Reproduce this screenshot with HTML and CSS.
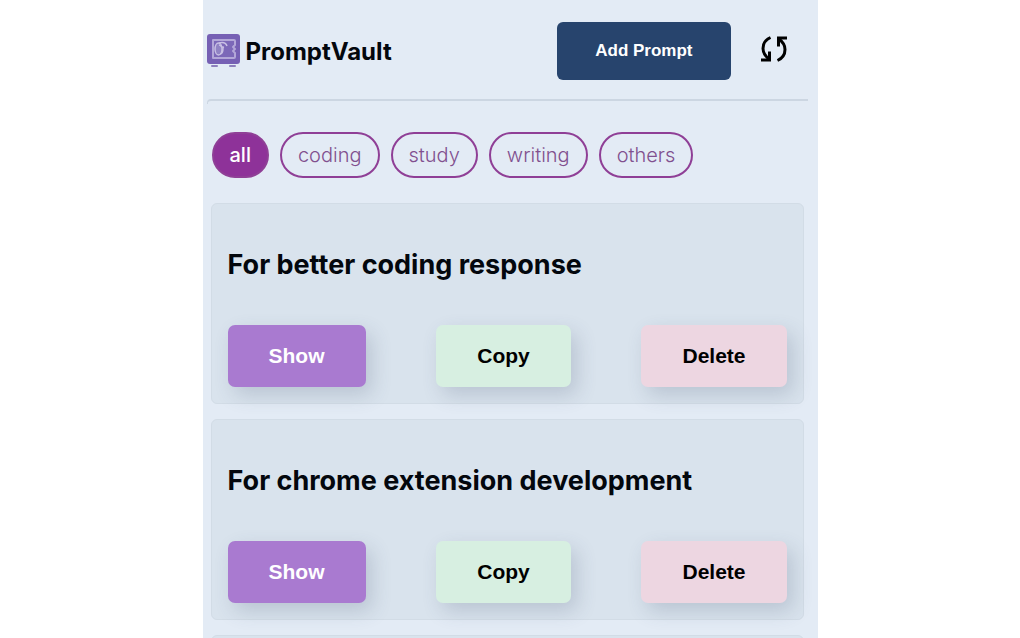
FILE: index.html
```html
<!DOCTYPE html>
<html lang="en">
<head>
  <meta charset="UTF-8" />
  <meta name="viewport" content="width=device-width, initial-scale=1.0"/>
  <title>PromptVault</title>
  <link rel="stylesheet" href="styles.css">
</head>
<body>

  <div class="popup">
    <header class="header">
      <div class="brand">
        <svg class="logo" viewBox="0 0 33 34" aria-hidden="true">
          <rect x="4" y="31" width="7" height="2" rx="1" fill="#8d80bd"/>
          <rect x="22" y="31" width="7" height="2" rx="1" fill="#8d80bd"/>
          <rect width="33" height="30" rx="3" fill="#7660b4"/>
          <path d="M6 6h21q1 0 1 1v4l-2 2 2 2-2 2 2 2v4q0 1-1 1H6z" fill="#7c68b8" stroke="#b3a7d8" stroke-width="2" stroke-linejoin="round"/>
          <ellipse cx="11.500" cy="15" rx="3.500" ry="6" fill="#9183c4" stroke="#c9c0e4" stroke-width="1.500"/>
          <path d="M12 11c3 0 1 3 5 2M12 9c4-1 7 0 8 3M13 20c2 0 3-2 3-6" fill="none" stroke="#c9c0e4" stroke-width="1.500"/>
        </svg>
        <h1>PromptVault</h1>
      </div>
      <div class="actions">
        <button class="add-btn">Add Prompt</button>
        <button class="reload-btn" aria-label="Reload">
          <svg class="reload-icon" viewBox="0 0 28 26" fill="none" stroke="#000" stroke-width="3" aria-hidden="true">
            <path d="M10.500 1.500C6 3.500 3 7.500 3 12.500c0 4.500 2 7.500 6 10.500"/>
            <path d="M1 24h8.500v-8.500"/>
            <path d="M17.500 24.500c4.500-2 7.500-6 7.500-11 0-4.500-2-7.500-6-10.500"/>
            <path d="M27 2h-8.500v8.500"/>
          </svg>
        </button>
      </div>
    </header>

    <hr class="divider">

    <nav class="tags">
      <button class="tag active">all</button>
      <button class="tag">coding</button>
      <button class="tag">study</button>
      <button class="tag">writing</button>
      <button class="tag">others</button>
    </nav>

    <main class="prompts">
      <article class="card">
        <h2>For better coding response</h2>
        <div class="card-buttons">
          <button class="btn show">Show</button>
          <button class="btn copy">Copy</button>
          <button class="btn delete">Delete</button>
        </div>
      </article>
      <article class="card">
        <h2>For chrome extension development</h2>
        <div class="card-buttons">
          <button class="btn show">Show</button>
          <button class="btn copy">Copy</button>
          <button class="btn delete">Delete</button>
        </div>
      </article>
      <article class="card"></article>
    </main>
  </div>

</body>
</html>
```

FILE: styles.css
```css
* {
  box-sizing: border-box;
}

body {
  margin: 0;
  background-color: #fff;
  font-family: Inter, sans-serif;
  color: #03070d;
}

button {
  font-family: "Liberation Sans", Arial, sans-serif;
  cursor: pointer;
}

.popup {
  max-width: 615px;
  height: 100vh;
  margin: 0 auto;
  padding: 22px 8px 0;
  background-color: #e3ebf5;
  overflow: hidden;
}

.header {
  display: flex;
  justify-content: space-between;
  align-items: center;
  padding: 0 22px 0 0;
  margin-left: -4px;
}

.brand {
  display: flex;
  align-items: center;
  gap: 6px;
}

.logo {
  width: 33px;
  height: 34px;
}

h1 {
  margin: 0;
  font-size: 24px;
  font-weight: 700;
}

.actions {
  display: flex;
  align-items: center;
  gap: 29px;
}

.add-btn {
  padding: 18px 38px;
  border: none;
  border-radius: 6px;
  background-color: #27446d;
  color: #fff;
  font-size: 17px;
  line-height: 22px;
  font-weight: bold;
}

.reload-btn {
  padding: 0 0 4px;
  border: none;
  background: none;
}

.reload-icon {
  display: block;
  width: 28px;
  height: 26px;
}

.divider {
  height: 5px;
  margin: 19px 2px 0 -4px;
  border: solid #ccd6e2;
  border-width: 2px 0 0 1px;
  border-radius: 4px 0 0 0;
}

.tags {
  display: flex;
  gap: 11px;
  padding: 28px 1px 25px;
}

.tag {
  padding: 9px 16px;
  border: 2px solid #8f3f96;
  border-radius: 23px;
  background: none;
  color: #81508f;
  font-family: Inter, sans-serif;
  font-size: 20px;
  font-weight: 300;
  line-height: 24px;
}

.tag.active {
  background-color: #8e3299;
  color: #fff;
  font-weight: 500;
}

.prompts {
  display: flex;
  flex-direction: column;
  gap: 15px;
  padding-right: 6px;
}

.card {
  flex: none;
  min-height: 200px;
  padding: 40px 16px 16px;
  border: 1px solid #d2dce6;
  border-radius: 6px;
  background-color: #d9e3ed;
}

h2 {
  margin: 0 0 40px;
  font-size: 27px;
  font-weight: 700;
  line-height: 41px;
}

.card-buttons {
  display: flex;
  justify-content: space-between;
}

.btn {
  padding: 19px 41px;
  border: none;
  border-radius: 7px;
  font-size: 21px;
  line-height: 24px;
  font-weight: bold;
  color: #000;
  box-shadow: 6px 8px 20px rgba(60, 75, 105, 0.2);
}

.btn.show {
  background-color: #a97ad0;
  color: #fff;
}

.btn.copy {
  background-color: #d7efe1;
}

.btn.delete {
  background-color: #edd6e1;
}
```
